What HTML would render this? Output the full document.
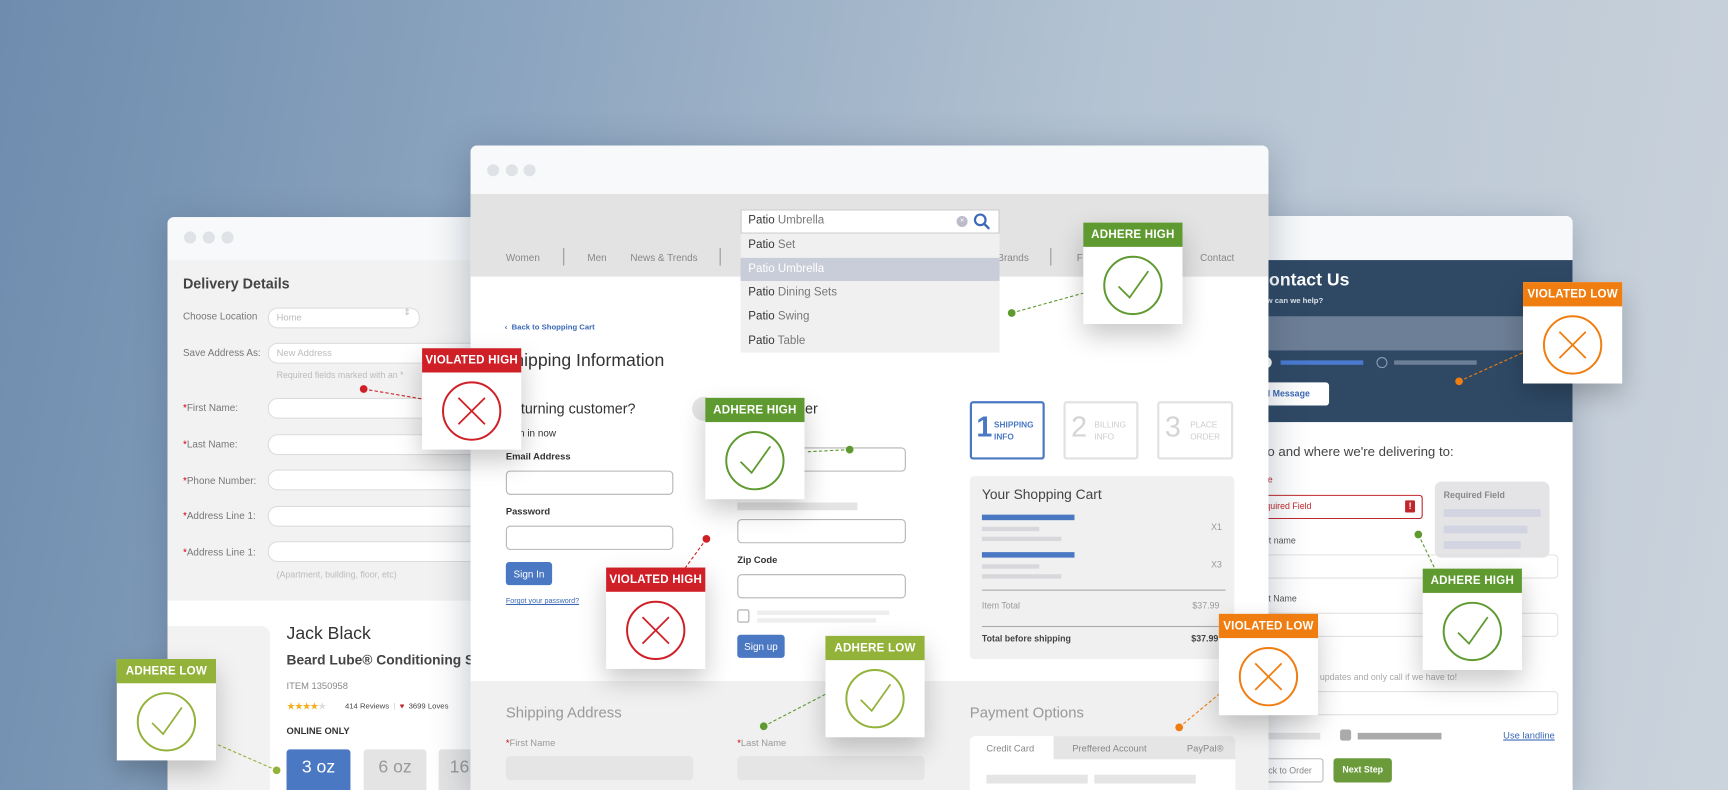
<!DOCTYPE html>
<html><head><meta charset="utf-8"><style>
*{margin:0;padding:0;box-sizing:border-box}
html,body{width:1728px;height:790px;overflow:hidden}
body{background:linear-gradient(100deg,#6e8cae 0%,#8ea6c0 30%,#b4c3d2 60%,#cbd3dc 100%);font-family:"Liberation Sans",sans-serif}
#s{position:absolute;left:0;top:0;width:1568px;height:717px;transform:scale(1.10204);transform-origin:0 0;overflow:hidden}
.a{position:absolute}
.win{position:absolute;background:#fff;border-radius:6px 6px 0 0;overflow:hidden;box-shadow:0 6px 30px rgba(40,60,90,.25)}
.tb{position:absolute;left:0;top:0;right:0;background:#f7f9fa}
.dot{position:absolute;width:11px;height:11px;border-radius:50%;background:#dfe3e7}
.t{position:absolute;white-space:nowrap}
.inp{position:absolute;background:#fff;border:1px solid #ddd;border-radius:9px}
.box{position:absolute;background:#fff;border:1.5px solid #b5b5b5;border-radius:4px}
.btn{position:absolute;color:#fff;border-radius:3px;font-size:9px;text-align:center}
.b{position:absolute;width:90px;height:92px;background:#fff;box-shadow:0 10px 22px rgba(0,0,0,.22)}
.b .h{height:22px;line-height:22px;color:#fff;font-weight:bold;font-size:10.5px;text-align:center;letter-spacing:.2px}
.b svg{display:block}
</style></head><body><div id="s">

<!-- LEFT WINDOW -->
<div class="win" style="left:152px;top:197px;width:300px;height:520px">
 <div class="tb" style="height:39px"></div>
 <div class="dot" style="left:15px;top:13px"></div><div class="dot" style="left:32px;top:13px"></div><div class="dot" style="left:49px;top:13px"></div>
 <div class="a" style="left:0;top:39px;width:300px;height:309px;background:#f2f2f2"></div>
 <div class="t" style="left:14px;top:53px;font-size:13px;font-weight:bold;color:#444">Delivery Details</div>
 <div class="t" style="left:14px;top:85px;font-size:9px;color:#777">Choose Location</div>
 <div class="inp" style="left:91px;top:82px;width:138px;height:19px"></div>
 <div class="t" style="left:99px;top:86px;font-size:8.5px;color:#bbb">Home</div>
 <div class="t" style="left:214px;top:82px;font-size:8px;color:#bbb">⇕</div>
 <div class="t" style="left:14px;top:118px;font-size:9px;color:#777">Save Address As:</div>
 <div class="inp" style="left:91px;top:114px;width:220px;height:19px"></div>
 <div class="t" style="left:99px;top:118px;font-size:8.5px;color:#bbb">New Address</div>
 <div class="t" style="left:99px;top:139px;font-size:8px;color:#bbb">Required fields marked with an *</div>
 <div class="t" style="left:14px;top:168px;font-size:9px;color:#777"><span style="color:#c00">*</span>First Name:</div>
 <div class="inp" style="left:91px;top:164px;width:220px;height:19px"></div>
 <div class="t" style="left:14px;top:201px;font-size:9px;color:#777"><span style="color:#c00">*</span>Last Name:</div>
 <div class="inp" style="left:91px;top:197px;width:220px;height:19px"></div>
 <div class="t" style="left:14px;top:234px;font-size:9px;color:#777"><span style="color:#c00">*</span>Phone Number:</div>
 <div class="inp" style="left:91px;top:229px;width:220px;height:19px"></div>
 <div class="t" style="left:14px;top:266px;font-size:9px;color:#777"><span style="color:#c00">*</span>Address Line 1:</div>
 <div class="inp" style="left:91px;top:262px;width:220px;height:19px"></div>
 <div class="t" style="left:14px;top:299px;font-size:9px;color:#777"><span style="color:#c00">*</span>Address Line 1:</div>
 <div class="inp" style="left:91px;top:294px;width:220px;height:19px"></div>
 <div class="t" style="left:99px;top:320px;font-size:8px;color:#bbb">(Apartment, building, floor, etc)</div>
 <div class="a" style="left:-10px;top:371px;width:103px;height:149px;background:#f2f2f2;border-radius:8px 8px 0 0"></div>
 <div class="t" style="left:108px;top:370px;font-size:16px;color:#333">Jack Black</div>
 <div class="t" style="left:108px;top:395px;font-size:12.5px;font-weight:bold;color:#444">Beard Lube® Conditioning Sha</div>
 <div class="t" style="left:108px;top:420px;font-size:8.5px;color:#888">ITEM 1350958</div>
 <div class="t" style="left:108px;top:439px;font-size:9px;color:#f2b01e;letter-spacing:-1px">★★★★<span style="color:#ddd">★</span></div>
 <div class="t" style="left:161px;top:441px;font-size:7px;color:#444">414 Reviews &nbsp;<span style="color:#ccc">|</span>&nbsp; <span style="color:#c0272d">♥</span> &nbsp;3699 Loves</div>
 <div class="t" style="left:108px;top:461px;font-size:8.5px;font-weight:bold;color:#333">ONLINE ONLY</div>
 <div class="a" style="left:108px;top:483px;width:58px;height:37px;background:#4a78c3;border-radius:3px 3px 0 0;color:#fff;font-size:16px;text-align:center;padding-top:8px">3 oz</div>
 <div class="a" style="left:178px;top:483px;width:57px;height:37px;background:#e4e4e4;border-radius:3px 3px 0 0;color:#999;font-size:16px;text-align:center;padding-top:8px">6 oz</div>
 <div class="a" style="left:246px;top:483px;width:57px;height:37px;background:#e4e4e4;border-radius:3px 3px 0 0;color:#999;font-size:16px;padding:8px 0 0 10px">16</div>
</div>

<!-- RIGHT WINDOW -->
<div class="win" style="left:1120px;top:196px;width:307px;height:521px">
 <div class="tb" style="height:40px"></div>
 <div class="a" style="left:0;top:40px;width:307px;height:147px;background:#2f4965"></div>
 <div class="t" style="left:20px;top:50px;font-size:16px;font-weight:bold;color:#fff">Contact Us</div>
 <div class="t" style="left:20px;top:74px;font-size:7px;font-weight:bold;color:#dfe5ec">How can we help?</div>
 <div class="a" style="left:0;top:91px;width:307px;height:31px;background:#6d7f96"></div>
 <div class="a" style="left:24px;top:128px;width:10px;height:10px;border-radius:50%;background:#fff"></div>
 <div class="a" style="left:42px;top:131px;width:75px;height:4px;background:#4a7bd0"></div>
 <div class="a" style="left:129px;top:128px;width:10px;height:10px;border-radius:50%;border:1px solid #8a9bb0"></div>
 <div class="a" style="left:145px;top:131px;width:75px;height:4px;background:#6d7f96"></div>
 <div class="a" style="left:5px;top:151px;width:81px;height:21px;background:#fff;border-radius:3px;color:#3b69b5;font-size:8px;font-weight:bold;padding:6px 0 0 8px">Send Message</div>
 <div class="t" style="left:12px;top:207px;font-size:12px;color:#444">Who and where we're delivering to:</div>
 <div class="t" style="left:20px;top:235px;font-size:8px;color:#c0272d">Title</div>
 <div class="a" style="left:10px;top:253px;width:161px;height:22px;border:1px solid #c0272d;border-radius:3px"></div>
 <div class="t" style="left:18px;top:259px;font-size:8px;color:#c0272d">Required Field</div>
 <div class="a" style="left:155px;top:258px;width:9px;height:11px;background:#c0272d;border-radius:1px;color:#fff;font-size:8px;font-weight:bold;text-align:center;line-height:11px">!</div>
 <div class="a" style="left:182px;top:241px;width:104px;height:69px;background:#e4e4e6;border-radius:6px"></div>
 <div class="t" style="left:190px;top:249px;font-size:8px;font-weight:bold;color:#888">Required Field</div>
 <div class="a" style="left:190px;top:266px;width:88px;height:7px;background:#d2d4e2"></div>
 <div class="a" style="left:190px;top:281px;width:76px;height:7px;background:#d2d4e2"></div>
 <div class="a" style="left:190px;top:295px;width:70px;height:7px;background:#d2d4e2"></div>
 <div class="t" style="left:18px;top:290px;font-size:8px;color:#555">First name</div>
 <div class="a" style="left:10px;top:307px;width:284px;height:22px;border:1px solid #e2e2e2;border-radius:4px"></div>
 <div class="t" style="left:18px;top:343px;font-size:8px;color:#555">Last Name</div>
 <div class="a" style="left:10px;top:360px;width:284px;height:22px;border:1px solid #e2e2e2;border-radius:4px"></div>
 <div class="t" style="left:18px;top:397px;font-size:8px;color:#555">Phone Number</div>
 <div class="t" style="left:18px;top:414px;font-size:8px;color:#aaa">We'll send order updates and only call if we have to!</div>
 <div class="a" style="left:10px;top:431px;width:284px;height:22px;border:1px solid #e2e2e2;border-radius:4px"></div>
 <div class="a" style="left:20px;top:469px;width:58px;height:6px;background:#e4e4e4"></div>
 <div class="a" style="left:96px;top:466px;width:10px;height:10px;background:#aaa;border-radius:2px"></div>
 <div class="a" style="left:112px;top:469px;width:76px;height:6px;background:#aaa"></div>
 <div class="t" style="left:244px;top:466px;font-size:8.5px;color:#3b69b5;text-decoration:underline">Use landline</div>
 <div class="a" style="left:10px;top:492px;width:71px;height:22px;border:1px solid #bbb;border-radius:3px;color:#888;font-size:8px;padding:6px 0 0 10px">Back to Order</div>
 <div class="a" style="left:90px;top:492px;width:53px;height:22px;background:#6a9a3a;border-radius:3px;color:#fff;font-size:8px;font-weight:bold;text-align:center;padding-top:6px">Next Step</div>
</div>

<!-- CENTER WINDOW -->
<div class="win" style="left:427px;top:132px;width:724px;height:585px;box-shadow:0 8px 36px rgba(30,50,80,.3)">
 <div class="tb" style="height:44px"></div>
 <div class="dot" style="left:15px;top:17px"></div><div class="dot" style="left:32px;top:17px"></div><div class="dot" style="left:48px;top:17px"></div>
 <div class="a" style="left:0;top:44px;width:724px;height:75px;background:#e3e3e3"></div>
 <div class="t" style="left:32px;top:97px;font-size:9px;color:#888">Women</div>
 <div class="a" style="left:84px;top:93px;width:1px;height:16px;background:#999"></div>
 <div class="t" style="left:106px;top:97px;font-size:9px;color:#888">Men</div>
 <div class="t" style="left:145px;top:97px;font-size:9px;color:#888">News &amp; Trends</div>
 <div class="a" style="left:226px;top:93px;width:1px;height:16px;background:#999"></div>
 <div class="t" style="left:478px;top:97px;font-size:9px;color:#888">Brands</div>
 <div class="a" style="left:526px;top:93px;width:1px;height:16px;background:#999"></div>
 <div class="t" style="left:550px;top:97px;font-size:9px;color:#888">F</div>
 <div class="t" style="left:662px;top:97px;font-size:9px;color:#888">Contact</div>
 <div class="a" style="left:245px;top:58px;width:235px;height:22px;background:#fff;border:1px solid #ccc"></div>
 <div class="t" style="left:252px;top:62px;font-size:10.5px;color:#777"><span style="color:#333">Patio</span> Umbrella</div>
 <div class="a" style="left:441px;top:64px;width:10px;height:10px;border-radius:50%;background:#bbc;color:#fff;font-size:7px;text-align:center;line-height:10px">×</div>
 <svg class="a" style="left:456px;top:61px" width="16" height="16" viewBox="0 0 16 16"><circle cx="6.5" cy="6.5" r="4.8" fill="none" stroke="#3d6ab7" stroke-width="2"/><path d="M10 10 L14 14" stroke="#3d6ab7" stroke-width="2.2" stroke-linecap="round"/></svg>
 <div class="a" style="left:245px;top:80px;width:235px;height:108px;background:#f0f0f0"></div>
 <div class="a" style="left:245px;top:102px;width:235px;height:21px;background:#c9ccd9"></div>
 <div class="t" style="left:252px;top:84px;font-size:10.5px;color:#777"><span style="color:#333">Patio</span> Set</div>
 <div class="t" style="left:252px;top:106px;font-size:10.5px;color:#fff">Patio Umbrella</div>
 <div class="t" style="left:252px;top:127px;font-size:10.5px;color:#777"><span style="color:#333">Patio</span> Dining Sets</div>
 <div class="t" style="left:252px;top:149px;font-size:10.5px;color:#777"><span style="color:#333">Patio</span> Swing</div>
 <div class="t" style="left:252px;top:171px;font-size:10.5px;color:#777"><span style="color:#333">Patio</span> Table</div>
 <div class="t" style="left:31px;top:162px;font-size:7px;font-weight:bold;color:#3b69b5">‹&nbsp; Back to Shopping Cart</div>
 <div class="t" style="left:29px;top:187px;font-size:16px;color:#333">Shipping Information</div>
 <div class="t" style="left:29px;top:231px;font-size:13px;color:#333">Returning customer?</div>
 <div class="t" style="left:31px;top:256px;font-size:9px;color:#333">Sign in now</div>
 <div class="t" style="left:32px;top:277px;font-size:8.5px;font-weight:bold;color:#333">Email Address</div>
 <div class="box" style="left:32px;top:295px;width:152px;height:22px"></div>
 <div class="t" style="left:32px;top:327px;font-size:8.5px;font-weight:bold;color:#333">Password</div>
 <div class="box" style="left:32px;top:345px;width:152px;height:22px"></div>
 <div class="btn" style="left:32px;top:378px;width:42px;height:21px;background:#4a78c3;padding-top:6px">Sign In</div>
 <div class="t" style="left:32px;top:410px;font-size:6.5px;color:#3b69b5;text-decoration:underline">Forgot your password?</div>
 <div class="a" style="left:201px;top:228px;width:22px;height:22px;border-radius:50%;background:#e4e4e4"></div>
 <div class="t" style="left:232px;top:231px;font-size:13px;color:#333">New customer</div>
 <div class="box" style="left:242px;top:274px;width:153px;height:22px"></div>
 <div class="a" style="left:242px;top:324px;width:109px;height:7px;background:#e4e4e4"></div>
 <div class="box" style="left:242px;top:339px;width:153px;height:22px"></div>
 <div class="t" style="left:242px;top:371px;font-size:8.5px;font-weight:bold;color:#333">Zip Code</div>
 <div class="box" style="left:242px;top:389px;width:153px;height:22px"></div>
 <div class="a" style="left:242px;top:421px;width:11px;height:12px;border:1px solid #aaa;border-radius:2px"></div>
 <div class="a" style="left:260px;top:422px;width:120px;height:4px;background:#eee"></div>
 <div class="a" style="left:260px;top:429px;width:108px;height:4px;background:#eee"></div>
 <div class="btn" style="left:242px;top:444px;width:43px;height:21px;background:#4a78c3;padding-top:6px">Sign up</div>
 <div class="a" style="left:453px;top:232px;width:68px;height:53px;border:2px solid #4a78c3;border-radius:3px"></div>
 <div class="t" style="left:459px;top:240px;font-size:26px;font-weight:bold;color:#4a78c3">1</div>
 <div class="t" style="left:475px;top:248px;font-size:7.5px;font-weight:bold;color:#4a78c3;line-height:11px">SHIPPING<br>INFO</div>
 <div class="a" style="left:538px;top:232px;width:68px;height:53px;border:2px solid #e2e2e2;border-radius:3px"></div>
 <div class="t" style="left:545px;top:240px;font-size:26px;color:#d4d4d4">2</div>
 <div class="t" style="left:566px;top:248px;font-size:7.5px;color:#ccc;line-height:11px">BILLING<br>INFO</div>
 <div class="a" style="left:623px;top:232px;width:69px;height:53px;border:2px solid #e2e2e2;border-radius:3px"></div>
 <div class="t" style="left:630px;top:240px;font-size:26px;color:#d4d4d4">3</div>
 <div class="t" style="left:653px;top:248px;font-size:7.5px;color:#ccc;line-height:11px">PLACE<br>ORDER</div>
 <div class="a" style="left:453px;top:300px;width:240px;height:166px;background:#f0f0f0;border-radius:4px"></div>
 <div class="t" style="left:464px;top:310px;font-size:12.5px;color:#444">Your Shopping Cart</div>
 <div class="a" style="left:464px;top:335px;width:84px;height:5px;background:#4a78c3"></div>
 <div class="a" style="left:464px;top:346px;width:52px;height:4px;background:#d8d8dc"></div>
 <div class="a" style="left:464px;top:355px;width:72px;height:4px;background:#d8d8dc"></div>
 <div class="t" style="left:672px;top:342px;font-size:8px;color:#999">X1</div>
 <div class="a" style="left:464px;top:369px;width:84px;height:5px;background:#4a78c3"></div>
 <div class="a" style="left:464px;top:380px;width:52px;height:4px;background:#d8d8dc"></div>
 <div class="a" style="left:464px;top:389px;width:72px;height:4px;background:#d8d8dc"></div>
 <div class="t" style="left:672px;top:376px;font-size:8px;color:#999">X3</div>
 <div class="a" style="left:464px;top:403px;width:221px;height:1px;background:#aaa"></div>
 <div class="t" style="left:464px;top:413px;font-size:8px;color:#999">Item Total</div>
 <div class="t" style="left:655px;top:413px;font-size:8px;color:#999">$37.99</div>
 <div class="a" style="left:464px;top:436px;width:221px;height:1px;background:#aaa"></div>
 <div class="t" style="left:464px;top:443px;font-size:8px;font-weight:bold;color:#444">Total before shipping</div>
 <div class="t" style="left:654px;top:443px;font-size:8px;font-weight:bold;color:#444">$37.99</div>
 <div class="a" style="left:0;top:486px;width:724px;height:99px;background:#f0f0f0"></div>
 <div class="t" style="left:32px;top:507px;font-size:13.5px;color:#999">Shipping Address</div>
 <div class="t" style="left:32px;top:537px;font-size:8.5px;color:#999"><span style="color:#c00">*</span>First Name</div>
 <div class="a" style="left:32px;top:554px;width:170px;height:22px;background:#e5e5e5;border-radius:4px"></div>
 <div class="t" style="left:242px;top:537px;font-size:8.5px;color:#999"><span style="color:#c00">*</span>Last Name</div>
 <div class="a" style="left:242px;top:554px;width:170px;height:22px;background:#e5e5e5;border-radius:4px"></div>
 <div class="t" style="left:453px;top:507px;font-size:13.5px;color:#999">Payment Options</div>
 <div class="a" style="left:453px;top:536px;width:241px;height:49px;background:#fff;border-radius:5px 5px 0 0"></div>
 <div class="a" style="left:529px;top:536px;width:165px;height:21px;background:#e5e5e5;border-radius:0 5px 0 0"></div>
 <div class="t" style="left:468px;top:542px;font-size:8.5px;color:#888">Credit Card</div>
 <div class="t" style="left:546px;top:542px;font-size:8.5px;color:#888">Preffered Account</div>
 <div class="t" style="left:650px;top:542px;font-size:8.5px;color:#888">PayPal®</div>
 <div class="a" style="left:468px;top:571px;width:92px;height:8px;background:#e5e5e5"></div>
 <div class="a" style="left:566px;top:571px;width:92px;height:8px;background:#e5e5e5"></div>
</div>

<!-- CONNECTORS -->
<svg class="a" style="left:0;top:0" width="1568" height="717">
 <g stroke-width="1" stroke-dasharray="3 2" fill="none">
  <path d="M330 353 L383 362" stroke="#cf2027"/>
  <path d="M918 284 L983 266" stroke="#5e9a2f"/>
  <path d="M1324 346 L1382 320" stroke="#f07d10"/>
  <path d="M771 408 L731 410" stroke="#5e9a2f"/>
  <path d="M641 489 L622 515" stroke="#cf2027"/>
  <path d="M693 659 L749 630" stroke="#5e9a2f"/>
  <path d="M1070 660 L1106 630" stroke="#f07d10"/>
  <path d="M1287 485 L1302 516" stroke="#5e9a2f"/>
  <path d="M251 699 L196 675" stroke="#93b23a"/>
 </g>
 <circle cx="330" cy="353" r="3.5" fill="#cf2027"/><circle cx="918" cy="284" r="3.5" fill="#5e9a2f"/>
 <circle cx="1324" cy="346" r="3.5" fill="#f07d10"/><circle cx="771" cy="408" r="3.5" fill="#5e9a2f"/>
 <circle cx="641" cy="489" r="3.5" fill="#cf2027"/><circle cx="693" cy="659" r="3.5" fill="#5e9a2f"/>
 <circle cx="1070" cy="660" r="3.5" fill="#f07d10"/><circle cx="1287" cy="485" r="3.5" fill="#5e9a2f"/>
 <circle cx="251" cy="699" r="3.5" fill="#93b23a"/>
</svg>

<!-- BADGES -->
<div class="b" style="left:383px;top:316px"><div class="h" style="background:#cf2027">VIOLATED HIGH</div><svg width="90" height="70"><circle cx="45" cy="35" r="26" fill="none" stroke="#cf2027" stroke-width="1.8"/><path d="M33 23 L57 47 M57 23 L33 47" stroke="#cf2027" stroke-width="1.6"/></svg></div>
<div class="b" style="left:983px;top:202px"><div class="h" style="background:#5e9a2f">ADHERE HIGH</div><svg width="90" height="70"><circle cx="45" cy="35" r="26" fill="none" stroke="#5e9a2f" stroke-width="1.8"/><path d="M32 36 L42 46 L59 22" fill="none" stroke="#5e9a2f" stroke-width="1.6"/></svg></div>
<div class="b" style="left:1382px;top:256px"><div class="h" style="background:#f07d10">VIOLATED LOW</div><svg width="90" height="70"><circle cx="45" cy="35" r="26" fill="none" stroke="#f07d10" stroke-width="1.8"/><path d="M33 23 L57 47 M57 23 L33 47" stroke="#f07d10" stroke-width="1.6"/></svg></div>
<div class="b" style="left:640px;top:361px"><div class="h" style="background:#5e9a2f">ADHERE HIGH</div><svg width="90" height="70"><circle cx="45" cy="35" r="26" fill="none" stroke="#5e9a2f" stroke-width="1.8"/><path d="M32 36 L42 46 L59 22" fill="none" stroke="#5e9a2f" stroke-width="1.6"/></svg></div>
<div class="b" style="left:550px;top:515px"><div class="h" style="background:#cf2027">VIOLATED HIGH</div><svg width="90" height="70"><circle cx="45" cy="35" r="26" fill="none" stroke="#cf2027" stroke-width="1.8"/><path d="M33 23 L57 47 M57 23 L33 47" stroke="#cf2027" stroke-width="1.6"/></svg></div>
<div class="b" style="left:749px;top:577px"><div class="h" style="background:#93b23a">ADHERE LOW</div><svg width="90" height="70"><circle cx="45" cy="35" r="26" fill="none" stroke="#93b23a" stroke-width="1.8"/><path d="M32 36 L42 46 L59 22" fill="none" stroke="#93b23a" stroke-width="1.6"/></svg></div>
<div class="b" style="left:1106px;top:557px"><div class="h" style="background:#f07d10">VIOLATED LOW</div><svg width="90" height="70"><circle cx="45" cy="35" r="26" fill="none" stroke="#f07d10" stroke-width="1.8"/><path d="M33 23 L57 47 M57 23 L33 47" stroke="#f07d10" stroke-width="1.6"/></svg></div>
<div class="b" style="left:1291px;top:516px"><div class="h" style="background:#5e9a2f">ADHERE HIGH</div><svg width="90" height="70"><circle cx="45" cy="35" r="26" fill="none" stroke="#5e9a2f" stroke-width="1.8"/><path d="M32 36 L42 46 L59 22" fill="none" stroke="#5e9a2f" stroke-width="1.6"/></svg></div>
<div class="b" style="left:106px;top:598px"><div class="h" style="background:#93b23a">ADHERE LOW</div><svg width="90" height="70"><circle cx="45" cy="35" r="26" fill="none" stroke="#93b23a" stroke-width="1.8"/><path d="M32 36 L42 46 L59 22" fill="none" stroke="#93b23a" stroke-width="1.6"/></svg></div>

</div></body></html>
